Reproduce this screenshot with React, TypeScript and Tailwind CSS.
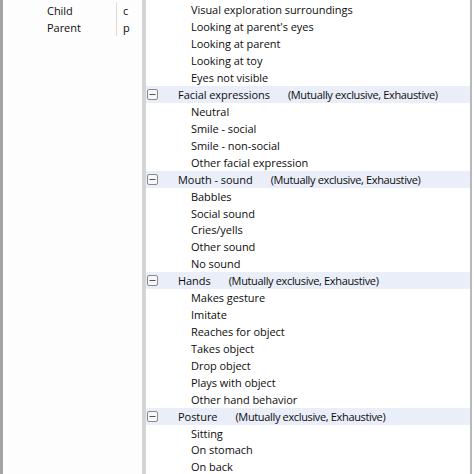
import React from 'react'

type Group = {
  name: string
  items: string[]
  header?: boolean
}

const subjects = [
  { name: 'Child', key: 'c' },
  { name: 'Parent', key: 'p' },
]

const groups: Group[] = [
  {
    name: 'Gaze',
    header: false,
    items: [
      'Visual exploration surroundings',
      "Looking at parent's eyes",
      'Looking at parent',
      'Looking at toy',
      'Eyes not visible',
    ],
  },
  {
    name: 'Facial expressions',
    items: ['Neutral', 'Smile - social', 'Smile - non-social', 'Other facial expression'],
  },
  {
    name: 'Mouth - sound',
    items: ['Babbles', 'Social sound', 'Cries/yells', 'Other sound', 'No sound'],
  },
  {
    name: 'Hands',
    items: [
      'Makes gesture',
      'Imitate',
      'Reaches for object',
      'Takes object',
      'Drop object',
      'Plays with object',
      'Other hand behavior',
    ],
  },
  {
    name: 'Posture',
    items: ['Sitting', 'On stomach', 'On back'],
  },
]

function CollapseBox() {
  return (
    <svg width="11" height="11" viewBox="0 0 11 11" className="shrink-0">
      <rect x="0.5" y="0.5" width="10" height="10" rx="1.5" fill="#f7f7f7" stroke="#8a8a8a" />
      <line x1="2.5" y1="5.5" x2="8.5" y2="5.5" stroke="#555" strokeWidth="1" />
    </svg>
  )
}

export default function App() {
  return (
    <div
      className="flex h-[474px] w-[474px] overflow-hidden whitespace-nowrap bg-white text-[11px] tracking-[-0.05px] text-[#0d0d0d]"
      style={{ fontFamily: '"Open Sans", "Noto Sans", sans-serif' }}
    >
      {/* subjects list */}
      <div className="w-[3px] shrink-0 bg-[#a4a4a4]" />
      <div className="flex w-[139px] shrink-0 flex-col bg-[#fdfdfd]">
        <div className="mt-[2px] flex flex-col">
          {subjects.map((s) => (
            <div key={s.key} className="flex h-[17px] items-center leading-none">
              <div className="w-[113px] pl-[44px]">{s.name}</div>
              <div className="h-full w-px bg-[#dcdcdc]" />
              <div className="pl-[6px]">{s.key}</div>
            </div>
          ))}
        </div>
      </div>
      <div className="w-[4px] shrink-0 bg-[#d4d4d4]" />

      {/* behaviors tree */}
      <div className="flex min-w-0 flex-1 flex-col overflow-hidden">
        <div className="mt-[1.5px] flex flex-col">
          {groups.map((g) => (
            <div key={g.name} className="flex flex-col">
              {g.header !== false && (
                <div className="flex h-[16.93px] items-center bg-[#e9eef8] leading-none">
                  <div className="pl-[1px]">
                    <CollapseBox />
                  </div>
                  <div className="pl-[20px]">{g.name}</div>
                  <div className="pl-[18px] tracking-[-0.35px]">(Mutually exclusive, Exhaustive)</div>
                </div>
              )}
              {g.items.map((it) => (
                <div key={it} className="flex h-[16.93px] items-center pl-[45px] leading-none">
                  {it}
                </div>
              ))}
            </div>
          ))}
        </div>
      </div>
      <div className="w-[2px] shrink-0 bg-[#b8b8b8]" />
      <div className="w-[2px] shrink-0 bg-white" />
    </div>
  )
}
